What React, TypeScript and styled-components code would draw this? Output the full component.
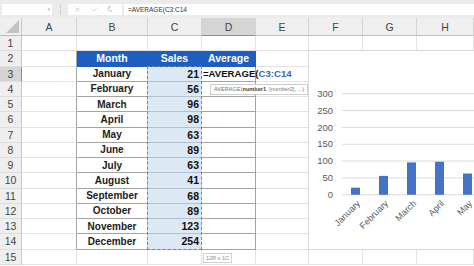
import React from "react";
import styled, { createGlobalStyle } from "styled-components";
import { X, Check } from "lucide-react";

const GlobalStyle = createGlobalStyle`
  html, body {
    margin: 0;
    padding: 0;
    background: #ffffff;
  }
  body {
    font-family: "Liberation Sans", Arial, sans-serif;
    overflow: hidden;
  }
`;

const COLUMNS = ["A", "B", "C", "D", "E", "F", "G", "H"];
const ROW_COUNT = 15;

const SALES: [string, number][] = [
  ["January", 21],
  ["February", 56],
  ["March", 96],
  ["April", 98],
  ["May", 63],
  ["June", 89],
  ["July", 63],
  ["August", 41],
  ["September", 68],
  ["October", 89],
  ["November", 123],
  ["December", 254],
];

const GRID_LINE = "#e2e2e2";
const TABLE_LINE = "#a3a3a3";
const HEAD_BLUE = "#1e5ec2";
const PICK_BLUE = "#dde8f5";

// chart geometry (px inside the chart frame)
const ZERO_Y = 143.75;
const UNIT = 0.3367;
const BAR_X = 42;
const BAR_STEP = 28;
const BAR_W = 9;
const VISIBLE_MONTHS = 5;

export default function App() {
  const rows = Array.from({ length: ROW_COUNT }, (_, i) => i + 1);

  const renderCell = (r: number, c: number) => {
    const key = `${COLUMNS[c]}${r}`;
    const col = c + 2;
    const row = r + 1;

    // cells hidden under the chart
    if (c >= 5 && r >= 2 && r <= 14) return null;

    if (r === 2 && c >= 1 && c <= 3) {
      return (
        <HeadCell key={key} $col={col} $row={row}>
          {["Month", "Sales", "Average"][c - 1]}
        </HeadCell>
      );
    }

    if (r >= 3 && r <= 14 && c >= 1 && c <= 3) {
      const [month, sales] = SALES[r - 3];
      if (c === 1)
        return (
          <MonthCell key={key} $col={col} $row={row}>
            {month}
          </MonthCell>
        );
      if (c === 2)
        return (
          <SalesCell key={key} $col={col} $row={row}>
            {sales}
          </SalesCell>
        );
      if (r === 3)
        return (
          <FormulaCell key={key} $col={col} $row={row}>
            =AVERAGE(<RangeRef>C3:C14</RangeRef>
          </FormulaCell>
        );
      return <AverageCell key={key} $col={col} $row={row} />;
    }

    const edgeA = c === 0 && r >= 2 && r <= 14;
    return (
      <Cell
        key={key}
        $col={col}
        $row={row}
        $right={edgeA ? TABLE_LINE : GRID_LINE}
      />
    );
  };

  return (
    <Page>
      <GlobalStyle />
      <FormulaBar>
        <NameBox>
          <Caret>▾</Caret>
        </NameBox>
        <Divider />
        <ButtonBox>
          <X size={7} strokeWidth={1.6} color="#9a9a9a" />
          <Check size={7} strokeWidth={1.6} color="#9a9a9a" />
          <FxMark>
            f<sub>x</sub>
          </FxMark>
        </ButtonBox>
        <FormulaBox>=AVERAGE(C3:C14</FormulaBox>
      </FormulaBar>

      <Sheet>
        <Corner>
          <CornerTriangle />
        </Corner>
        {COLUMNS.map((letter, i) => (
          <ColHeader key={letter} $col={i + 2} $active={letter === "D"}>
            {letter}
          </ColHeader>
        ))}
        {rows.map((r) => (
          <RowHeader key={r} $row={r + 1} $active={r === 3}>
            {r}
          </RowHeader>
        ))}
        {rows.map((r) => COLUMNS.map((_, c) => renderCell(r, c)))}

        <MarchingAnts />

        <ChartFrame>
          <SalesChart />
        </ChartFrame>

        <ArgHint>
          AVERAGE(<b>number1</b>, [number2], ...)
        </ArgHint>
        <SizeHint>12R x 1C</SizeHint>
      </Sheet>
    </Page>
  );
}

const SalesChart = () => {
  const ticks = [0, 50, 100, 150, 200, 250, 300];
  return (
    <svg width={170} height={200}>
      {ticks.map((t) => {
        const y = ZERO_Y - t * UNIT;
        return (
          <g key={t}>
            <line x1={33} x2={170} y1={y} y2={y} stroke="#d9d9d9" strokeWidth={1} />
            <text
              x={24}
              y={y + 3.2}
              textAnchor="end"
              fontSize={9.5}
              fill="#595959"
              fontFamily='"Liberation Sans", Arial, sans-serif'
            >
              {t}
            </text>
          </g>
        );
      })}
      {SALES.slice(0, VISIBLE_MONTHS).map(([month, v], i) => {
        const x = BAR_X + i * BAR_STEP;
        const h = v * UNIT;
        const cx = x + BAR_W / 2;
        return (
          <g key={month}>
            <rect x={x} y={ZERO_Y - h} width={BAR_W} height={h} fill="#4472c4" />
            <text
              transform={`translate(${cx + 3}, ${ZERO_Y + 7}) rotate(-45)`}
              textAnchor="end"
              fontSize={9}
              fill="#595959"
              fontFamily='"Liberation Sans", Arial, sans-serif'
              dy="0.35em"
            >
              {month}
            </text>
          </g>
        );
      })}
    </svg>
  );
};

const Page = styled.div`
  display: flex;
  flex-direction: column;
  width: 474px;
  height: 266px;
  overflow: hidden;
`;

const FormulaBar = styled.div`
  flex: none;
  height: 18px;
  display: flex;
  align-items: center;
  padding-left: 2px;
  background: #ebebeb;
  box-sizing: border-box;
`;

const NameBox = styled.div`
  width: 50px;
  height: 11px;
  background: #ffffff;
  display: flex;
  align-items: center;
  justify-content: flex-end;
  padding-right: 2px;
  box-sizing: border-box;
`;

const Caret = styled.span`
  font-size: 5px;
  color: #b0b0b0;
  font-family: "DejaVu Sans", sans-serif;
`;

const Divider = styled.div`
  width: 0;
  height: 9px;
  margin: 0 7px 0 8px;
  border-left: 1px dotted #b5b5b5;
`;

const ButtonBox = styled.div`
  width: 54px;
  height: 11px;
  background: #ffffff;
  display: flex;
  align-items: center;
  gap: 10px;
  padding-left: 6px;
  box-sizing: border-box;
`;

const FxMark = styled.span`
  font-family: "Liberation Serif", serif;
  font-style: italic;
  font-size: 7px;
  color: #8a8a8a;
  line-height: 1;

  sub {
    font-size: 4px;
  }
`;

const FormulaBox = styled.div`
  flex: 1;
  height: 11px;
  margin-left: 2px;
  background: #ffffff;
  display: flex;
  align-items: center;
  padding-left: 4px;
  font-size: 6.5px;
  color: #333333;
`;

const Sheet = styled.div`
  position: relative;
  display: grid;
  grid-template-columns: 22px 55px 71px 54px 54px 53px 54px 54px 57px;
  grid-template-rows: 18px repeat(${ROW_COUNT}, 15.25px);
`;

const Corner = styled.div`
  grid-column: 1;
  grid-row: 1;
  display: flex;
  align-items: flex-end;
  justify-content: flex-end;
  padding: 0 2px 2px 0;
  background: #efefef;
  border-right: 1px solid #c8c8c8;
  border-bottom: 1px solid #bdbdbd;
  box-sizing: border-box;
`;

const CornerTriangle = styled.div`
  width: 13px;
  height: 13px;
  background: #c3c3c3;
  clip-path: polygon(100% 0, 100% 100%, 0 100%);
`;

const ColHeader = styled.div<{ $col: number; $active?: boolean }>`
  grid-column: ${(p) => p.$col};
  grid-row: 1;
  display: flex;
  align-items: center;
  justify-content: center;
  background: ${(p) => (p.$active ? "#d5d5d5" : "#efefef")};
  border-right: 1px solid #d3d3d3;
  border-bottom: 1px solid ${(p) => (p.$active ? "#8f8f8f" : "#bdbdbd")};
  box-sizing: border-box;
  font-size: 10.5px;
  color: #444444;
`;

const RowHeader = styled.div<{ $row: number; $active?: boolean }>`
  grid-column: 1;
  grid-row: ${(p) => p.$row};
  display: flex;
  align-items: center;
  justify-content: center;
  background: ${(p) => (p.$active ? "#d5d5d5" : "#efefef")};
  border-right: 1px solid ${(p) => (p.$active ? "#8f8f8f" : "#c8c8c8")};
  border-bottom: 1px solid #dedede;
  box-sizing: border-box;
  font-size: 10.5px;
  color: #444444;
`;

const Cell = styled.div<{ $col: number; $row: number; $right?: string; $bottom?: string }>`
  grid-column: ${(p) => p.$col};
  grid-row: ${(p) => p.$row};
  display: flex;
  align-items: center;
  min-width: 0;
  padding: 0 2px;
  box-sizing: border-box;
  border-right: 1px solid ${(p) => p.$right ?? GRID_LINE};
  border-bottom: 1px solid ${(p) => p.$bottom ?? GRID_LINE};
  font-size: 10px;
  font-weight: bold;
  color: #1b1b1b;
  white-space: nowrap;
`;

const HeadCell = styled(Cell)`
  justify-content: center;
  background: ${HEAD_BLUE};
  border-right-color: ${HEAD_BLUE};
  border-bottom-color: ${HEAD_BLUE};
  color: #ffffff;
  font-size: 10.5px;
`;

const MonthCell = styled(Cell)`
  justify-content: center;
  background: #ffffff;
  border-right-color: #c9d6e8;
  border-bottom-color: ${TABLE_LINE};
`;

const SalesCell = styled(Cell)`
  justify-content: flex-end;
  padding-right: 2px;
  background: ${PICK_BLUE};
  border-bottom-color: #b5c1d2;
  font-size: 10.5px;
  color: #111111;
`;

const AverageCell = styled(Cell)`
  background: #ffffff;
  border-right-color: ${TABLE_LINE};
  border-bottom-color: ${TABLE_LINE};
`;

const FormulaCell = styled(AverageCell)`
  z-index: 3;
  overflow: visible;
  padding-left: 1px;
  font-size: 9.6px;
  color: #111111;
  background: transparent;
`;

const RangeRef = styled.span`
  color: #3566b3;
`;

const MarchingAnts = styled.div`
  grid-column: 4;
  grid-row: 4 / 16;
  z-index: 2;
  margin: -1px 0 0 -1px;
  border: 1px dashed #6b84a8;
  pointer-events: none;
`;

const ChartFrame = styled.div`
  grid-column: 7 / 10;
  grid-row: 3 / 16;
  z-index: 1;
  margin: -1px 0 0 -1px;
  background: #ffffff;
  border-left: 1px solid #d9d9d9;
  border-top: 1px solid #d9d9d9;
  border-bottom: 1px solid #d9d9d9;
  overflow: hidden;
`;

const ArgHint = styled.div`
  position: absolute;
  left: 210px;
  top: 66px;
  z-index: 4;
  padding: 1px 3px;
  background: #ffffff;
  border: 1px solid #cfcfcf;
  font-size: 5.6px;
  line-height: 7px;
  color: #747474;
  white-space: nowrap;

  b {
    color: #444444;
  }
`;

const SizeHint = styled.div`
  position: absolute;
  left: 203px;
  top: 235px;
  z-index: 4;
  padding: 1px 2px;
  background: #ffffff;
  border: 1px solid #d2d2d2;
  font-size: 5.5px;
  line-height: 6px;
  color: #8a8a8a;
  white-space: nowrap;
`;
